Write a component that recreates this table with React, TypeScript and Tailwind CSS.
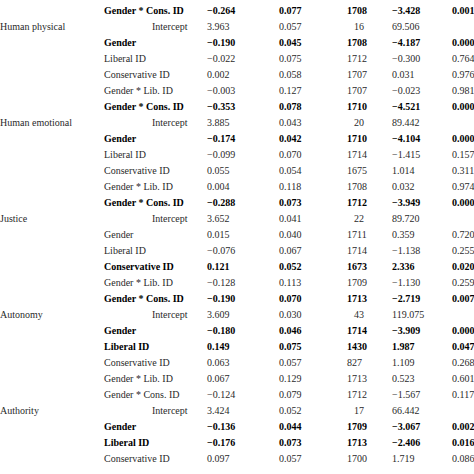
import React from "react";

type Row = {
  cat?: string;
  v: string;
  est: string;
  se: string;
  df: string;
  t: string;
  p: string;
  b?: boolean;
};

const rows: Row[] = [
  { v: "Gender * Cons. ID", est: "\u22120.264", se: "0.077", df: "1708", t: "\u22123.428", p: "0.001", b: true },
  { cat: "Human physical", v: "Intercept", est: "3.963", se: "0.057", df: "16", t: "69.506", p: "" },
  { v: "Gender", est: "\u22120.190", se: "0.045", df: "1708", t: "\u22124.187", p: "0.000", b: true },
  { v: "Liberal ID", est: "\u22120.022", se: "0.075", df: "1712", t: "\u22120.300", p: "0.764" },
  { v: "Conservative ID", est: "0.002", se: "0.058", df: "1707", t: "0.031", p: "0.976" },
  { v: "Gender * Lib. ID", est: "\u22120.003", se: "0.127", df: "1707", t: "\u22120.023", p: "0.981" },
  { v: "Gender * Cons. ID", est: "\u22120.353", se: "0.078", df: "1710", t: "\u22124.521", p: "0.000", b: true },
  { cat: "Human emotional", v: "Intercept", est: "3.885", se: "0.043", df: "20", t: "89.442", p: "" },
  { v: "Gender", est: "\u22120.174", se: "0.042", df: "1710", t: "\u22124.104", p: "0.000", b: true },
  { v: "Liberal ID", est: "\u22120.099", se: "0.070", df: "1714", t: "\u22121.415", p: "0.157" },
  { v: "Conservative ID", est: "0.055", se: "0.054", df: "1675", t: "1.014", p: "0.311" },
  { v: "Gender * Lib. ID", est: "0.004", se: "0.118", df: "1708", t: "0.032", p: "0.974" },
  { v: "Gender * Cons. ID", est: "\u22120.288", se: "0.073", df: "1712", t: "\u22123.949", p: "0.000", b: true },
  { cat: "Justice", v: "Intercept", est: "3.652", se: "0.041", df: "22", t: "89.720", p: "" },
  { v: "Gender", est: "0.015", se: "0.040", df: "1711", t: "0.359", p: "0.720" },
  { v: "Liberal ID", est: "\u22120.076", se: "0.067", df: "1714", t: "\u22121.138", p: "0.255" },
  { v: "Conservative ID", est: "0.121", se: "0.052", df: "1673", t: "2.336", p: "0.020", b: true },
  { v: "Gender * Lib. ID", est: "\u22120.128", se: "0.113", df: "1709", t: "\u22121.130", p: "0.259" },
  { v: "Gender * Cons. ID", est: "\u22120.190", se: "0.070", df: "1713", t: "\u22122.719", p: "0.007", b: true },
  { cat: "Autonomy", v: "Intercept", est: "3.609", se: "0.030", df: "43", t: "119.075", p: "" },
  { v: "Gender", est: "\u22120.180", se: "0.046", df: "1714", t: "\u22123.909", p: "0.000", b: true },
  { v: "Liberal ID", est: "0.149", se: "0.075", df: "1430", t: "1.987", p: "0.047", b: true },
  { v: "Conservative ID", est: "0.063", se: "0.057", df: "827", t: "1.109", p: "0.268" },
  { v: "Gender * Lib. ID", est: "0.067", se: "0.129", df: "1713", t: "0.523", p: "0.601" },
  { v: "Gender * Cons. ID", est: "\u22120.124", se: "0.079", df: "1712", t: "\u22121.567", p: "0.117" },
  { cat: "Authority", v: "Intercept", est: "3.424", se: "0.052", df: "17", t: "66.442", p: "" },
  { v: "Gender", est: "\u22120.136", se: "0.044", df: "1709", t: "\u22123.067", p: "0.002", b: true },
  { v: "Liberal ID", est: "\u22120.176", se: "0.073", df: "1713", t: "\u22122.406", p: "0.016", b: true },
  { v: "Conservative ID", est: "0.097", se: "0.057", df: "1700", t: "1.719", p: "0.086" },
];

export default function App() {
  return (
    <div
      className="w-[474px] h-[474px] overflow-hidden bg-white pt-[3px]"
      style={{ fontFamily: '"Liberation Serif", "Times New Roman", serif' }}
    >
      {rows.map((r, i) => (
        <div
          key={i}
          className={`grid grid-cols-[104px_103px_72px_68px_45px_60px_40px] h-[16px] leading-[16px] text-[10px] whitespace-nowrap ${
            r.b ? "font-bold text-black" : "text-[#2a2a2a]"
          }`}
        >
          <div className="font-normal text-[#2a2a2a]">{r.cat ?? ""}</div>
          <div className={r.v === "Intercept" ? "pl-[48px]" : ""}>{r.v}</div>
          <div>{r.est}</div>
          <div>{r.se}</div>
          <div className={r.df.length === 2 ? "pl-[7px]" : ""}>{r.df}</div>
          <div>{r.t}</div>
          <div>{r.p}</div>
        </div>
      ))}
    </div>
  );
}
